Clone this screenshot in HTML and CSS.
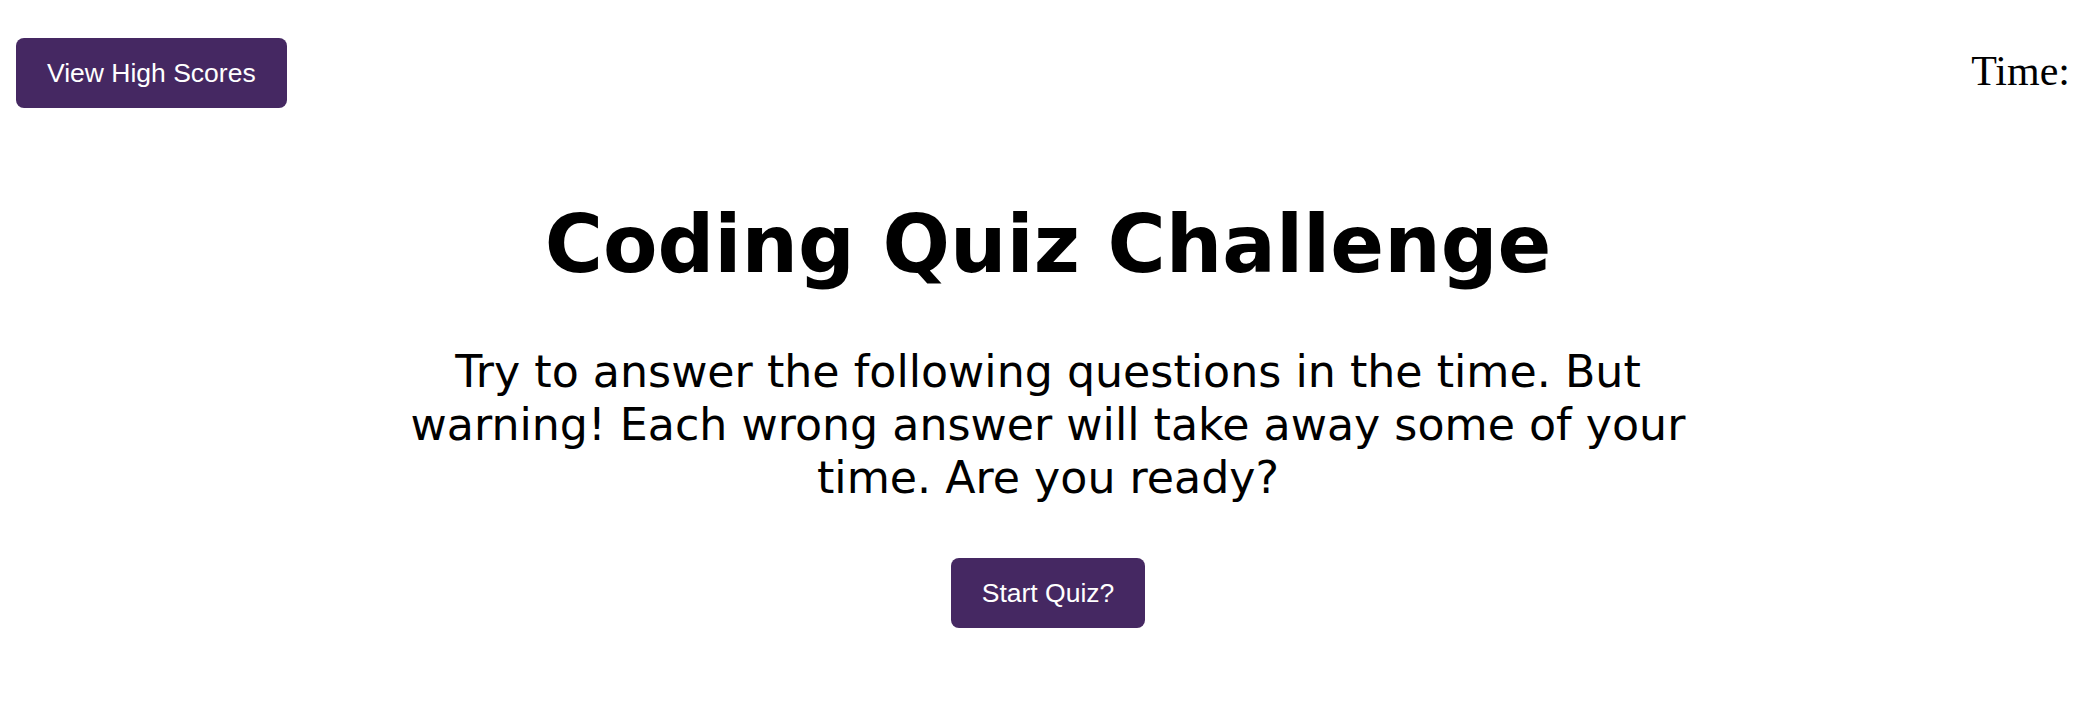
FILE: index.html
```html
<!DOCTYPE html>
<html lang="en">
<head>
<meta charset="utf-8">
<title>Coding Quiz Challenge</title>
<link rel="stylesheet" href="styles.css">
</head>
<body>
<header class="top-bar">
  <button class="btn">View High Scores</button>
  <div class="timer">Time:</div>
</header>
<main class="intro">
  <h1 class="title">Coding Quiz Challenge</h1>
  <p class="lead">Try to answer the following questions in the time. But warning! Each wrong answer will take away some of your time. Are you ready?</p>
  <button class="btn">Start Quiz?</button>
</main>
</body>
</html>
```
FILE: styles.css
```css
html, body {
  margin: 0;
  padding: 0;
  background: #ffffff;
  color: #000000;
}

.top-bar {
  display: flex;
  justify-content: space-between;
  align-items: flex-start;
  padding: 38px 26px 0 16px;
}

.btn {
  font-family: "Liberation Sans", Arial, sans-serif;
  font-size: 26.5px;
  line-height: 30px;
  color: #ffffff;
  background: #452862;
  border: none;
  border-radius: 8px;
  padding: 20px 31px;
  margin: 0;
  cursor: pointer;
}

.timer {
  font-family: "Liberation Serif", "Times New Roman", serif;
  font-size: 42px;
  margin-top: 9px;
}

.intro {
  display: flex;
  flex-direction: column;
  align-items: center;
  text-align: center;
}

.title {
  font-family: "DejaVu Sans", Verdana, sans-serif;
  font-weight: bold;
  font-size: 79.4px;
  line-height: 93px;
  margin: 90px 0 0 0;
}

.lead {
  font-family: "DejaVu Sans", Verdana, sans-serif;
  font-size: 44.3px;
  line-height: 53px;
  max-width: 1320px;
  margin: 54px 0 54px 0;
}
```
